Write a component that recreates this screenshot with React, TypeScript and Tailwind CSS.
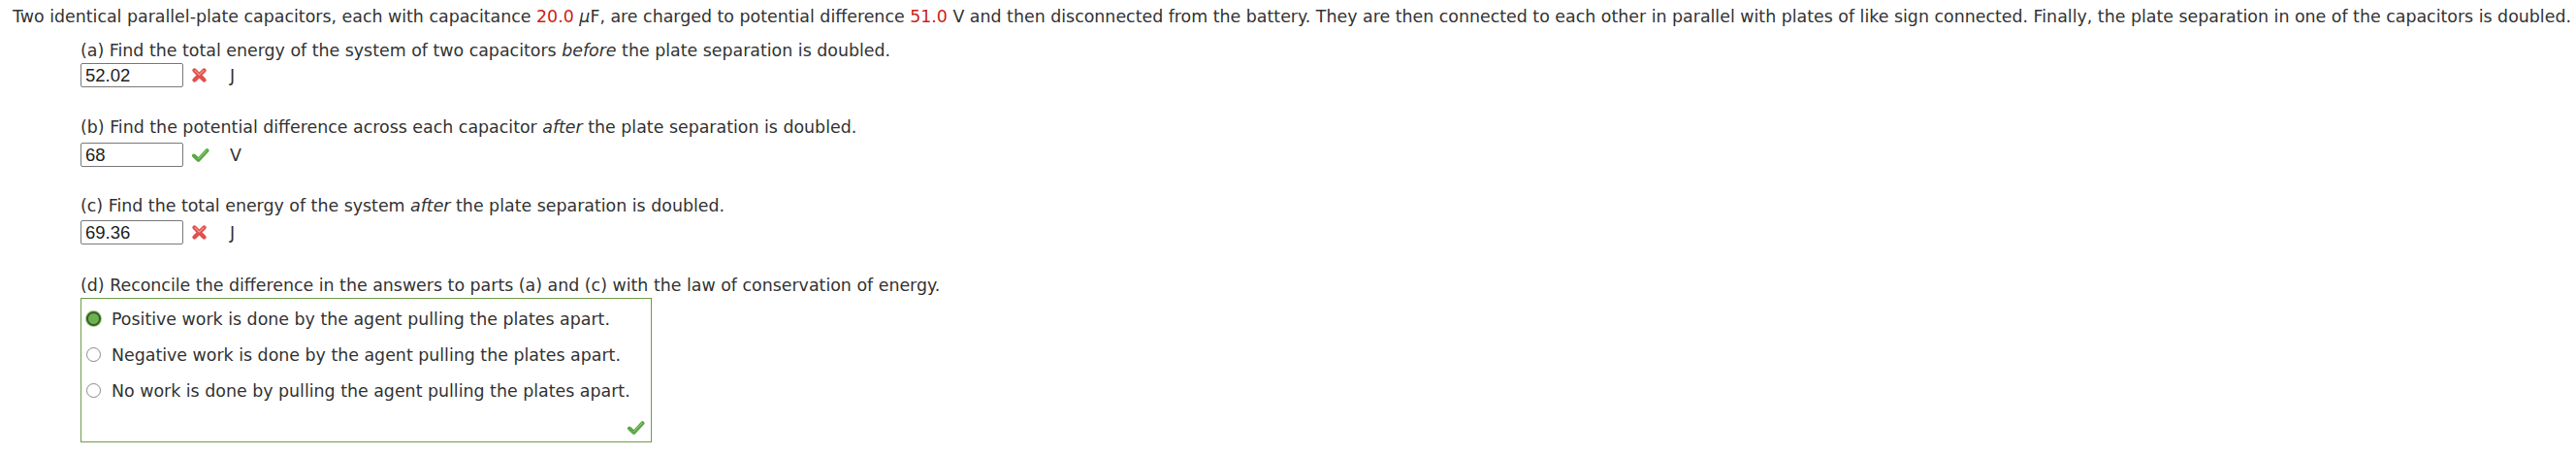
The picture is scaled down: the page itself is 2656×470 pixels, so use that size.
import React from 'react';

const font = { fontFamily: '"DejaVu Sans", Verdana, sans-serif' };

function CrossIcon() {
  return (
    <svg width="17" height="17" viewBox="0 0 17 17" className="shrink-0">
      <path d="M3.5 3.5 L13.5 13.5 M13.5 3.5 L3.5 13.5" stroke="#e0504c" strokeWidth="4.4" strokeLinecap="round" />
      <path d="M4 3.6 L8.5 8.1 M13 3.6 L8.5 8.1" stroke="#f29a96" strokeWidth="1.1" strokeLinecap="round" />
    </svg>
  );
}

function CheckIcon() {
  return (
    <svg width="19" height="16" viewBox="0 0 19 16" className="shrink-0">
      <path d="M3 8.5 L7.5 12.8 L16.5 3.2" fill="none" stroke="#5aa845" strokeWidth="4" strokeLinecap="round" strokeLinejoin="round" />
      <path d="M7.6 11.8 L16 3.1" fill="none" stroke="#94d47e" strokeWidth="1" strokeLinecap="round" />
    </svg>
  );
}

function AnswerRow({ value, ok, unit }: { value: string; ok: boolean; unit: string }) {
  return (
    <div className="flex flex-row items-center h-[25px]">
      <div
        className="w-[106px] h-[25px] border border-[#7a7a7a] rounded-[2px] bg-white pl-[4px] flex items-center text-[18.5px] text-[#222]"
        style={{ fontFamily: '"Liberation Sans", Arial, sans-serif' }}
      >
        {value}
      </div>
      <div className="ml-[8px] w-[22px] flex items-center">{ok ? <CheckIcon /> : <CrossIcon />}</div>
      <span className="ml-[18px] leading-[24px]">{unit}</span>
    </div>
  );
}

function Radio({ checked }: { checked: boolean }) {
  if (checked) {
    return (
      <span className="w-[15px] h-[15px] rounded-full border-[2px] border-[#3a5a2a] bg-[#6cb14f] shrink-0 shadow-[0_0_0_1px_#9ccc86]" />
    );
  }
  return <span className="w-[15px] h-[15px] rounded-full border border-[#8a8a8a] bg-white shrink-0" />;
}

const options = [
  { text: 'Positive work is done by the agent pulling the plates apart.', checked: true },
  { text: 'Negative work is done by the agent pulling the plates apart.', checked: false },
  { text: 'No work is done by pulling the agent pulling the plates apart.', checked: false },
];

export default function App() {
  return (
    <div className="w-[2656px] h-[470px] bg-white text-[#333] text-[17.4px] pl-[13px] pt-[5px]" style={font}>
      <p className="leading-[24px] whitespace-nowrap">
        Two identical parallel-plate capacitors, each with capacitance <span className="text-[#cc1f1a]">20.0</span>{' '}
        <i>μ</i>F, are charged to potential difference <span className="text-[#cc1f1a]">51.0</span> V and then
        disconnected from the battery. They are then connected to each other in parallel with plates of like sign
        connected. Finally, the plate separation in one of the capacitors is doubled.
      </p>

      <div className="ml-[70px]">
        <p className="mt-[11px] leading-[24px]">
          (a) Find the total energy of the system of two capacitors <i>before</i> the plate separation is doubled.
        </p>
        <div className="mt-[1px]">
          <AnswerRow value="52.02" ok={false} unit="J" />
        </div>

        <p className="mt-[29px] leading-[24px]">
          (b) Find the potential difference across each capacitor <i>after</i> the plate separation is doubled.
        </p>
        <div className="mt-[4px]">
          <AnswerRow value="68" ok={true} unit="V" />
        </div>

        <p className="mt-[28px] leading-[24px]">
          (c) Find the total energy of the system <i>after</i> the plate separation is doubled.
        </p>
        <div className="mt-[3px]">
          <AnswerRow value="69.36" ok={false} unit="J" />
        </div>

        <p className="mt-[30px] leading-[24px]">
          (d) Reconcile the difference in the answers to parts (a) and (c) with the law of conservation of energy.
        </p>
        <div className="mt-[1px] w-[589px] h-[149px] border border-[#6f9a47] pl-[5px] pt-[2px] pr-[6px] flex flex-col">
          {options.map((o) => (
            <div key={o.text} className="h-[37px] flex flex-row items-center gap-[11px]">
              <Radio checked={o.checked} />
              <span className="leading-[24px] whitespace-nowrap">{o.text}</span>
            </div>
          ))}
          <div className="flex flex-row justify-end mt-[12px]">
            <CheckIcon />
          </div>
        </div>
      </div>
    </div>
  );
}
